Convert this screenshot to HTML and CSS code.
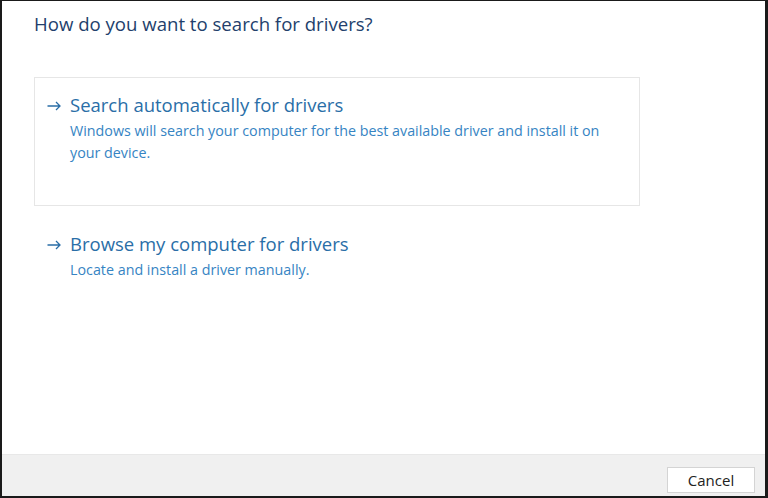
FILE: index.html
```html
<!DOCTYPE html>
<html>
<head>
<meta charset="utf-8">
<link rel="stylesheet" href="styles.css">
</head>
<body>
<div class="dialog">
  <div class="content">
    <h1 class="heading">How do you want to search for drivers?</h1>
    <div class="option option-card">
      <div class="option-title"><svg class="arrow" width="14" height="10" viewBox="0 0 14 10"><path d="M0.5 5H13M9 1L13 5L9 9" fill="none" stroke="currentColor" stroke-width="1.3"/></svg>Search automatically for drivers</div>
      <div class="option-desc">Windows will search your computer for the best available driver and install it on your device.</div>
    </div>
    <div class="option">
      <div class="option-title"><svg class="arrow" width="14" height="10" viewBox="0 0 14 10"><path d="M0.5 5H13M9 1L13 5L9 9" fill="none" stroke="currentColor" stroke-width="1.3"/></svg>Browse my computer for drivers</div>
      <div class="option-desc">Locate and install a driver manually.</div>
    </div>
  </div>
  <div class="footer">
    <button class="btn">Cancel</button>
  </div>
</div>
</body>
</html>
```
FILE: styles.css
```css
* { box-sizing: border-box; }
html, body { margin: 0; padding: 0; background: #fff; }
body {
  width: 768px;
  height: 498px;
  font-family: "Open Sans", "Noto Sans", sans-serif;
}
.dialog {
  width: 768px;
  height: 498px;
  border-style: solid;
  border-color: #1a1a1a;
  border-width: 1px 3px 2px 2px;
  display: flex;
  flex-direction: column;
  background: #fff;
}
.content {
  flex: 1;
  padding: 10px 0 0 32px;
}
.heading {
  margin: 0 0 40px 0;
  font-weight: 400;
  font-size: 18.6px;
  line-height: 26px;
  color: #233f6c;
}
.option {
  width: 606px;
  padding: 13px 10px 0 11px;
  border: 1px solid transparent;
}
.option-card {
  height: 129px;
  border-color: #e6e6e6;
  margin-bottom: 10px;
}
.option-title {
  display: flex;
  align-items: center;
  font-size: 18.5px;
  line-height: 28px;
  color: #2a6ea7;
}
.arrow {
  margin: 1px 9px 0 1px;
  flex: none;
}
.option-desc {
  margin-top: 1px;
  padding-left: 24px;
  font-size: 14.3px;
  line-height: 22px;
  color: #3684c3;
}
.footer {
  height: 42px;
  background: #f0f0f0;
  border-top: 1px solid #e8e8e8;
  display: flex;
  justify-content: flex-end;
  align-items: flex-start;
  padding: 12px 10px 0 0;
}
.btn {
  width: 88px;
  height: 26px;
  background: #fff;
  border: 1px solid #d4d4d4;
  font-family: "Open Sans", "Noto Sans", sans-serif;
  font-size: 15px;
  color: #222;
  padding: 0;
}
```
